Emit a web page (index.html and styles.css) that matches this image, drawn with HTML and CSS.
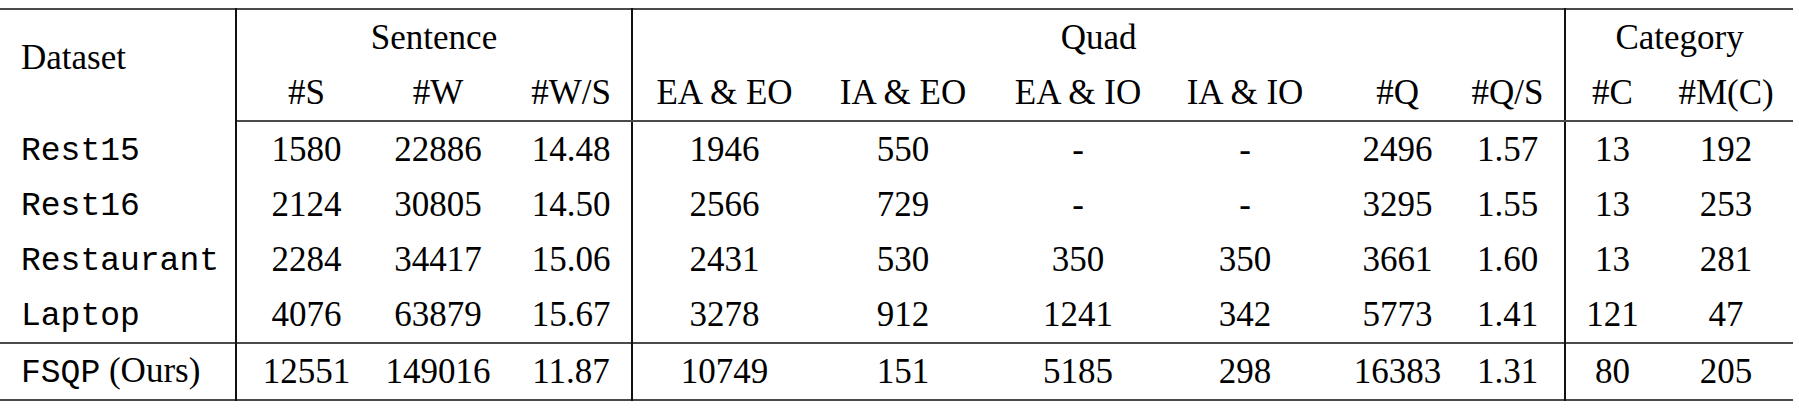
FILE: index.html
```html
<!DOCTYPE html>
<html lang="en">
<head>
    <meta charset="UTF-8">
    <meta name="viewport" content="width=device-width, initial-scale=1.0">
    <title>Dataset Statistics</title>
    <link rel="stylesheet" href="styles.css">
</head>
<body>
    <table class="stats-table">
        <colgroup>
            <col class="c-name">
            <col class="c-s"><col class="c-w"><col class="c-ws">
            <col class="c-eaeo"><col class="c-iaeo"><col class="c-eaio"><col class="c-iaio"><col class="c-q"><col class="c-qs">
            <col class="c-c"><col class="c-mc">
        </colgroup>
        <thead>
            <tr class="group-row">
                <th rowspan="2" class="name-cell dataset-head vline">Dataset</th>
                <th colspan="3" class="vline">Sentence</th>
                <th colspan="6" class="vline">Quad</th>
                <th colspan="2">Category</th>
            </tr>
            <tr class="sub-row">
                <th class="nudge-s">#S</th>
                <th>#W</th>
                <th class="vline">#W/S</th>
                <th>EA &amp; EO</th>
                <th>IA &amp; EO</th>
                <th>EA &amp; IO</th>
                <th>IA &amp; IO</th>
                <th class="nudge-q">#Q</th>
                <th class="vline">#Q/S</th>
                <th>#C</th>
                <th>#M(C)</th>
            </tr>
        </thead>
        <tbody>
            <tr>
                <td class="name-cell vline"><span class="mono">Rest15</span></td>
                <td class="nudge-s">1580</td><td>22886</td><td class="vline">14.48</td>
                <td>1946</td><td>550</td><td>-</td><td>-</td><td class="nudge-q">2496</td><td class="vline">1.57</td>
                <td>13</td><td>192</td>
            </tr>
            <tr>
                <td class="name-cell vline"><span class="mono">Rest16</span></td>
                <td class="nudge-s">2124</td><td>30805</td><td class="vline">14.50</td>
                <td>2566</td><td>729</td><td>-</td><td>-</td><td class="nudge-q">3295</td><td class="vline">1.55</td>
                <td>13</td><td>253</td>
            </tr>
            <tr>
                <td class="name-cell vline"><span class="mono">Restaurant</span></td>
                <td class="nudge-s">2284</td><td>34417</td><td class="vline">15.06</td>
                <td>2431</td><td>530</td><td>350</td><td>350</td><td class="nudge-q">3661</td><td class="vline">1.60</td>
                <td>13</td><td>281</td>
            </tr>
            <tr>
                <td class="name-cell vline"><span class="mono">Laptop</span></td>
                <td class="nudge-s">4076</td><td>63879</td><td class="vline">15.67</td>
                <td>3278</td><td>912</td><td>1241</td><td>342</td><td class="nudge-q">5773</td><td class="vline">1.41</td>
                <td>121</td><td>47</td>
            </tr>
            <tr class="ours-row">
                <td class="name-cell vline"><span class="mono">FSQP</span> (Ours)</td>
                <td class="nudge-s">12551</td><td>149016</td><td class="vline">11.87</td>
                <td>10749</td><td>151</td><td>5185</td><td>298</td><td class="nudge-q">16383</td><td class="vline">1.31</td>
                <td>80</td><td>205</td>
            </tr>
        </tbody>
    </table>
</body>
</html>
```

FILE: styles.css
```css
body {
    margin: 8px 0 0 0;
    background: #fff;
    color: #000;
    font-size: 35px;
}

.stats-table {
    border-collapse: collapse;
    table-layout: fixed;
    width: 1793px;
    border-top: 2px solid #4a4a4a;
    border-bottom: 2px solid #4a4a4a;
}

.stats-table,
.stats-table th,
.stats-table td {
    font-family: "Liberation Serif", Tinos, "Times New Roman", serif;
}

.c-name { width: 236px; }
.c-s { width: 129px; }
.c-w { width: 146px; }
.c-ws { width: 121px; }
.c-eaeo { width: 184px; }
.c-iaeo { width: 174px; }
.c-eaio { width: 176px; }
.c-iaio { width: 158px; }
.c-q { width: 127px; }
.c-qs { width: 114px; }
.c-c { width: 94px; }
.c-mc { width: 134px; }

.stats-table th,
.stats-table td {
    height: 55px;
    padding: 0;
    text-align: center;
    vertical-align: middle;
    font-weight: normal;
    white-space: nowrap;
    line-height: 1;
}

.stats-table .name-cell {
    text-align: left;
    padding-left: 21px;
}

.stats-table .dataset-head {
    padding-bottom: 16px;
}

.stats-table .nudge-s {
    padding-left: 11px;
}

.stats-table .nudge-q {
    padding-left: 20px;
}

.vline {
    border-right: 2px solid #111;
}

.sub-row th {
    border-bottom: 2px solid #4a4a4a;
}

.ours-row td {
    border-top: 2px solid #4a4a4a;
}

.stats-table .mono {
    font-family: "Liberation Mono", Cousine, "Courier New", monospace;
    font-size: 33px;
}
```
